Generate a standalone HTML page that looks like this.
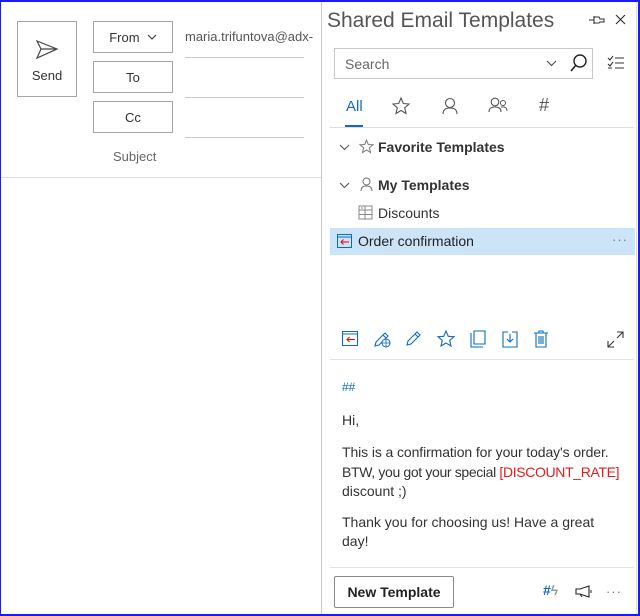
<!DOCTYPE html>
<html><head><style>
*{box-sizing:border-box;margin:0;padding:0}
body{width:640px;height:616px;overflow:hidden;background:#fff;font-family:"Liberation Sans",sans-serif;color:#222;position:relative}
.frame{position:absolute;left:0;top:0;width:640px;height:616px;border:1px solid #1a1aff;border-width:2px 2px 2px 1px;pointer-events:none}
.a{position:absolute}
.btn{position:absolute;border:1px solid #a6a6a6;background:#fff;font-size:13px;color:#333;display:flex;align-items:center;justify-content:center}
.ln{position:absolute;height:1px;background:#c8c8c8}
.t{position:absolute;font-size:14px;white-space:nowrap}
svg{position:absolute;overflow:visible}
</style></head><body>
<div class="btn" style="left:17px;top:21px;width:60px;height:76px;flex-direction:column">
<svg style="position:static;margin-top:4px" width="22" height="20" viewBox="0 0 22 20"><path d="M1 1 L21 9 L1 18 L5 9 Z M5 9 H21" fill="none" stroke="#444" stroke-width="1.2"/></svg>
<div style="margin-top:8px;font-size:13px">Send</div></div>
<div class="btn" style="left:93px;top:21px;width:80px;height:32px">From&nbsp;&nbsp;<svg style="position:static" width="10" height="6"><path d="M1 1L5 5L9 1" fill="none" stroke="#444" stroke-width="1.2"/></svg></div>
<div class="btn" style="left:93px;top:61px;width:80px;height:32px">To</div>
<div class="btn" style="left:93px;top:101px;width:80px;height:32px">Cc</div>
<div class="t" style="left:185px;top:29px;font-size:13px;color:#555">maria.trifuntova@adx-</div>
<div class="ln" style="left:185px;top:57px;width:119px"></div>
<div class="ln" style="left:185px;top:97px;width:119px"></div>
<div class="ln" style="left:185px;top:137px;width:119px"></div>
<div class="t" style="left:113px;top:149px;font-size:13px;color:#666">Subject</div>
<div class="ln" style="left:0;top:177px;width:321px;background:#ddd"></div>
<div class="a" style="left:321px;top:0;width:1px;height:616px;background:#c8c8c8"></div>
<div class="t" style="left:327px;top:9px;font-size:21px;color:#555">Shared Email Templates</div>
<svg style="left:589px;top:15px" width="16" height="10"><path d="M0 5H5 M5 1V9 M5 2H10L11 4H15V7H11L10 8H5" fill="none" stroke="#333" stroke-width="1.1"/></svg>
<svg style="left:615px;top:14px" width="11" height="11"><path d="M1 1L10 10M10 1L1 10" stroke="#333" stroke-width="1.2"/></svg>
<div class="a" style="left:334px;top:48px;width:259px;height:31px;border:1px solid #c8c8c8"></div>
<div class="t" style="left:345px;top:56px;color:#666">Search</div>
<svg style="left:546px;top:60px" width="11" height="7"><path d="M1 1L5.5 5.5L10 1" fill="none" stroke="#444" stroke-width="1.1"/></svg>
<svg style="left:570px;top:54px" width="18" height="18"><circle cx="10" cy="7" r="6" fill="none" stroke="#222" stroke-width="1.4"/><path d="M6 11L1 17" stroke="#222" stroke-width="1.6"/></svg>
<svg style="left:607px;top:55px" width="18" height="16"><path d="M1 3L3 5L6 1M1 9L3 11L6 7M8 3H17M8 8H17M8 13H17M1 13H5" fill="none" stroke="#333" stroke-width="1.1"/></svg>
<div class="t" style="left:346px;top:98px;font-size:15px;color:#0f6cbd">All</div>
<div class="a" style="left:345px;top:125px;width:18px;height:3px;background:#0f6cbd"></div>
<div class="ln" style="left:330px;top:127px;width:304px;background:#ddd"></div>
<svg style="left:392px;top:97px" width="18" height="18"><path d="M9 1L11.3 6.5L17 7L12.7 10.8L14 16.5L9 13.5L4 16.5L5.3 10.8L1 7L6.7 6.5Z" fill="none" stroke="#555" stroke-width="1.1"/></svg>
<svg style="left:442px;top:97px" width="16" height="18"><circle cx="8" cy="6" r="4.5" fill="none" stroke="#555" stroke-width="1.1"/><path d="M1 17Q1 11 8 11Q15 11 15 17" fill="none" stroke="#555" stroke-width="1.1"/></svg>
<svg style="left:488px;top:97px" width="20" height="16"><circle cx="7" cy="5" r="3.8" fill="none" stroke="#555" stroke-width="1.1"/><path d="M1 15Q1 10 7 10Q13 10 13 15" fill="none" stroke="#555" stroke-width="1.1"/><circle cx="15" cy="6" r="2.5" fill="none" stroke="#555" stroke-width="1"/><path d="M13 10Q19 9 19 14" fill="none" stroke="#555" stroke-width="1"/></svg>
<div class="t" style="left:539px;top:95px;font-size:18px;color:#555">#</div>
<svg style="left:339px;top:144px" width="11" height="7"><path d="M1 1L5.5 5.5L10 1" fill="none" stroke="#555" stroke-width="1.1"/></svg>
<svg style="left:359px;top:139px" width="15" height="15"><path d="M7.5 1L9.3 5.5L14 5.8L10.4 8.8L11.5 13.5L7.5 11L3.5 13.5L4.6 8.8L1 5.8L5.7 5.5Z" fill="none" stroke="#777" stroke-width="1"/></svg>
<div class="t" style="left:378px;top:139px;font-weight:bold;color:#333">Favorite Templates</div>
<svg style="left:339px;top:182px" width="11" height="7"><path d="M1 1L5.5 5.5L10 1" fill="none" stroke="#555" stroke-width="1.1"/></svg>
<svg style="left:360px;top:177px" width="13" height="15"><circle cx="6.5" cy="4.5" r="3.5" fill="none" stroke="#777" stroke-width="1"/><path d="M1 14Q1 9 6.5 9Q12 9 12 14" fill="none" stroke="#777" stroke-width="1"/></svg>
<div class="t" style="left:378px;top:177px;font-weight:bold;color:#333">My Templates</div>
<svg style="left:358px;top:205px" width="15" height="15"><path d="M1 1H14V14H1Z M7 1V14 M1 5H14 M1 9.5H14 M3 3H5" fill="none" stroke="#888" stroke-width="1"/></svg>
<div class="t" style="left:378px;top:205px;color:#333">Discounts</div>
<div class="a" style="left:330px;top:228px;width:305px;height:27px;background:#cce4f7"></div>
<svg style="left:337px;top:234px" width="15" height="14"><path d="M0.5 0.5H14.5V13.5H0.5Z M0.5 3H14.5" fill="none" stroke="#0f6cbd" stroke-width="1"/><path d="M12 8H4M6.5 5.5L4 8L6.5 10.5" fill="none" stroke="#e00" stroke-width="1"/></svg>
<div class="t" style="left:358px;top:233px;color:#222">Order confirmation</div>
<div class="t" style="left:612px;top:232px;color:#777;letter-spacing:1px;font-size:13px">···</div>
<svg style="left:342px;top:331px" width="16" height="15"><path d="M0.5 0.5H15.5V14.5H0.5Z M0.5 3H15.5" fill="none" stroke="#0f6cbd" stroke-width="1.1"/><path d="M13 8.5H5M7.5 6L5 8.5L7.5 11" fill="none" stroke="#e00" stroke-width="1"/></svg>
<svg style="left:373px;top:330px" width="18" height="18"><path d="M2 16L3 12L12 3L15 6L6 15Z M10 5L13 8" fill="none" stroke="#0f6cbd" stroke-width="1.1"/><circle cx="13" cy="13" r="4" fill="#fff" stroke="#0f6cbd" stroke-width="1"/><path d="M9 13H17M13 9V17" stroke="#0f6cbd" stroke-width="0.8"/></svg>
<svg style="left:405px;top:330px" width="17" height="17"><path d="M2 15L3 11L12 2L15 5L6 14Z M10 4L13 7" fill="none" stroke="#0f6cbd" stroke-width="1.1"/></svg>
<svg style="left:437px;top:330px" width="18" height="17"><path d="M9 1L11.3 6.3L17 6.7L12.7 10.5L14 16L9 13L4 16L5.3 10.5L1 6.7L6.7 6.3Z" fill="none" stroke="#0f6cbd" stroke-width="1.1"/></svg>
<svg style="left:470px;top:330px" width="16" height="18"><path d="M1 3V17H13 M4 1H15V14H4Z" fill="none" stroke="#0f6cbd" stroke-width="1.1"/></svg>
<svg style="left:502px;top:331px" width="16" height="17"><path d="M6 1H1V16H15V1H10 M8 3V11M5 8L8 11L11 8" fill="none" stroke="#0f6cbd" stroke-width="1.1"/></svg>
<svg style="left:534px;top:330px" width="14" height="18"><path d="M0 3H14 M5 3V1H9V3 M2 3V17H12V3 M5 6V14 M7 6V14 M9 6V14" fill="none" stroke="#0f6cbd" stroke-width="1.1"/></svg>
<svg style="left:607px;top:331px" width="17" height="17"><path d="M10 1H16V7 M16 1L10 7 M1 10V16H7 M1 16L7 10" fill="none" stroke="#333" stroke-width="1.1"/></svg>
<div class="ln" style="left:330px;top:359px;width:304px;background:#e3e3e3"></div>
<div class="t" style="left:342px;top:380px;font-size:12px;color:#0f6cbd">##</div>
<div class="t" style="left:342px;top:412px;color:#333">Hi,</div>
<div class="t" style="left:342px;top:444px;color:#333;letter-spacing:-0.1px">This is a confirmation for your today's order.</div>
<div class="t" style="left:342px;top:464px;color:#333;letter-spacing:-0.35px">BTW, you got your special <span style="color:#e31b1b">[DISCOUNT_RATE]</span></div>
<div class="t" style="left:342px;top:483px;color:#333">discount ;)</div>
<div class="t" style="left:342px;top:514px;color:#333">Thank you for choosing us! Have a great</div>
<div class="t" style="left:342px;top:533px;color:#333">day!</div>
<div class="ln" style="left:330px;top:567px;width:304px;background:#e3e3e3"></div>
<div class="btn" style="left:334px;top:576px;width:120px;height:32px;font-weight:bold;font-size:14px;color:#222;border-color:#8a8a8a;border-radius:2px">New Template</div>
<div class="t" style="left:543px;top:582px;font-size:14px;color:#0f6cbd;font-weight:bold">#<span style="color:#999">ϟ</span></div>
<svg style="left:575px;top:585px" width="18" height="13"><path d="M1 4H5L14 1V12L5 9H1Z M5 9L7 12" fill="none" stroke="#222" stroke-width="1.1"/><path d="M16 5V8" stroke="#222"/></svg>
<div class="t" style="left:606px;top:584px;color:#777;letter-spacing:1px;font-size:13px">···</div>
<div class="a" style="left:636px;top:0;width:1px;height:616px;background:#ddd"></div>
<div class="frame"></div>
</body></html>
